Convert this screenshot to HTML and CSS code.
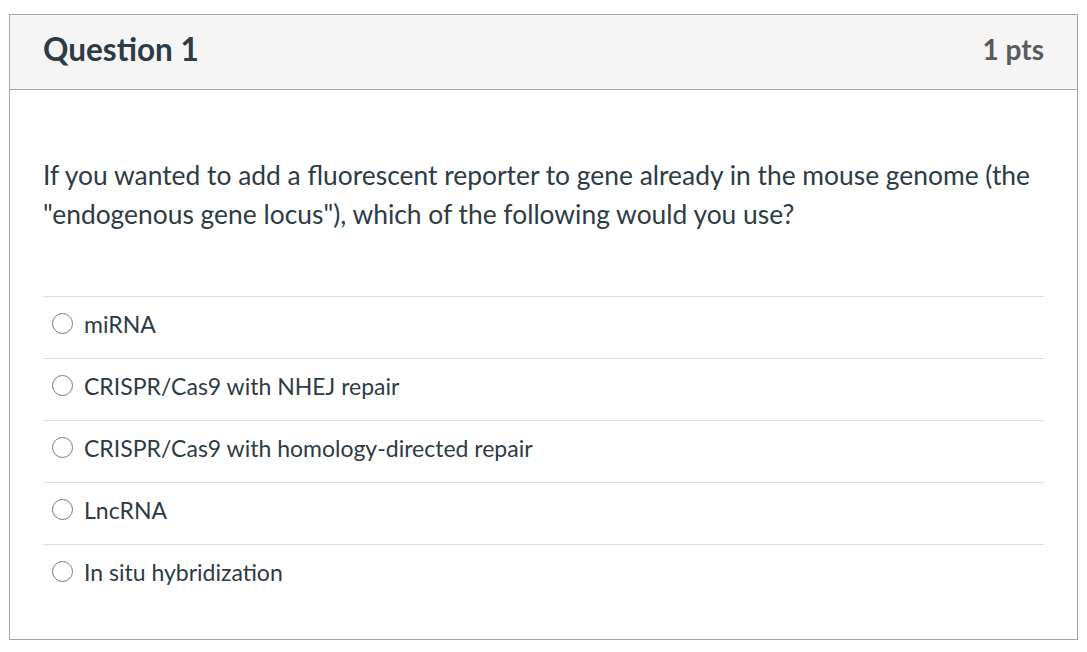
FILE: index.html
```html
<!DOCTYPE html>
<html>
<head>
<meta charset="utf-8">
<link rel="stylesheet" href="styles.css">
</head>
<body>
<div class="card">
  <div class="header">
    <h2 class="title">Question 1</h2>
    <div class="pts">1 pts</div>
  </div>
  <div class="content">
    <p class="question">If you wanted to add a fluorescent reporter to gene already in the mouse genome (the "endogenous gene locus"), which of the following would you use?</p>
    <div class="answers">
      <label class="answer"><span class="radio"></span><span class="label">miRNA</span></label>
      <label class="answer"><span class="radio"></span><span class="label">CRISPR/Cas9 with NHEJ repair</span></label>
      <label class="answer"><span class="radio"></span><span class="label">CRISPR/Cas9 with homology-directed repair</span></label>
      <label class="answer"><span class="radio"></span><span class="label">LncRNA</span></label>
      <label class="answer"><span class="radio"></span><span class="label">In situ hybridization</span></label>
    </div>
  </div>
</div>
</body>
</html>
```

FILE: styles.css
```css
html, body {
  margin: 0;
  padding: 0;
  background: #ffffff;
}
body {
  font-family: Lato, "Liberation Sans", sans-serif;
  color: #2d3b45;
  padding: 14px 9px 0 9px;
}
.card {
  border: 1px solid #a5a5a5;
  background: #fff;
  height: 626px;
  box-sizing: border-box;
}
.header {
  height: 75px;
  background: #f5f5f5;
  border-bottom: 1px solid #a5a5a5;
  display: flex;
  align-items: center;
  justify-content: space-between;
  padding: 0 33px 0 33px;
  box-sizing: border-box;
}
.title {
  margin: 0;
  font-size: 31.5px;
  font-weight: 700;
  color: #2d3b45;
  padding-bottom: 6px;
}
.pts {
  font-size: 28px;
  font-weight: 700;
  color: #5b5b5b;
  padding-bottom: 6px;
}
.content {
  padding: 66px 33px 0 33px;
}
.question {
  margin: 0;
  font-size: 26.4px;
  line-height: 39px;
  color: #2d3b45;
}
.answers {
  margin-top: 62px;
  display: flex;
  flex-direction: column;
}
.answer {
  display: flex;
  align-items: center;
  height: 62px;
  border-top: 1px solid #dcdfe1;
  box-sizing: border-box;
  padding-left: 9px;
  padding-bottom: 8px;
}
.radio {
  width: 21px;
  height: 21px;
  border: 1.5px solid #777;
  border-radius: 50%;
  box-sizing: border-box;
  flex: none;
  margin-right: 11px;
}
.label {
  font-size: 23px;
  color: #2d3b45;
}
```
